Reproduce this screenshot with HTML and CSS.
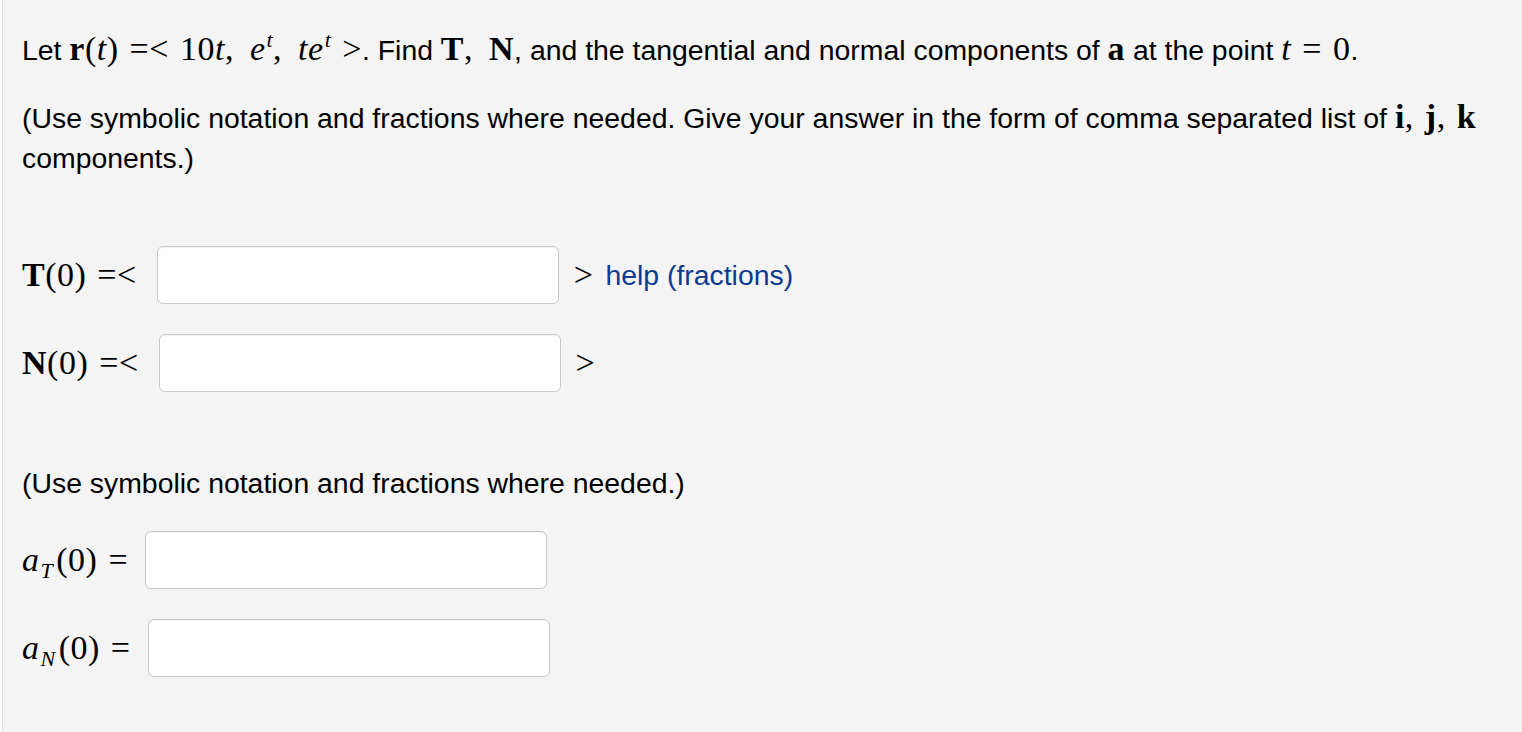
FILE: index.html
```html
<!DOCTYPE html>
<html>
<head>
<meta charset="utf-8">
<link rel="stylesheet" href="styles.css">
</head>
<body>
<div class="panel">
  <p class="q">Let <span class="m"><b>r</b>(<i>t</i>)<span class="rel">=&lt;</span>10<i>t</i>,<span class="sp"></span><i>e<sup>t</sup></i>,<span class="sp"></span><i>te<sup>t</sup></i><span class="rel r1">&gt;</span></span>. Find <span class="m"><b>T</b>,<span class="sp"></span><b>N</b></span>, and the tangential and normal components of <span class="m"><b>a</b></span> at the point <span class="m"><i>t</i><span class="rel">=</span>0</span>.</p>
  <p class="note">(Use symbolic notation and fractions where needed. Give your answer in the form of comma separated list of <span class="m"><b>i</b>,<span class="sp sm"></span><b>j</b>,<span class="sp sm"></span><b>k</b></span> components.)</p>
  <div class="row first">
    <span class="m lbl vec"><b>T</b>(0)<span class="rel">=&lt;</span></span>
    <input class="ans" type="text">
    <span class="m close">&gt;</span>
    <a class="help" href="#">help (fractions)</a>
  </div>
  <div class="row">
    <span class="m lbl vec"><b>N</b>(0)<span class="rel">=&lt;</span></span>
    <input class="ans" type="text">
    <span class="m close">&gt;</span>
  </div>
  <p class="note second">(Use symbolic notation and fractions where needed.)</p>
  <div class="row tight">
    <span class="m lbl"><i>a<sub>T</sub></i>(0)<span class="rel">=</span></span>
    <input class="ans" type="text">
  </div>
  <div class="row">
    <span class="m lbl"><i>a<sub>N</sub></i>(0)<span class="rel">=</span></span>
    <input class="ans" type="text">
  </div>
</div>
</body>
</html>
```

FILE: styles.css
```css
html, body {
  margin: 0;
  padding: 0;
  background: #fbfbfb;
}
.panel {
  margin-left: 2px;
  border-left: 1px solid #dedede;
  background: #f4f4f4;
  min-height: 732px;
  box-sizing: border-box;
  padding: 30px 19px 0 19px;
  font-family: "Liberation Sans", Arial, sans-serif;
  font-size: 28.4px;
  line-height: 40px;
  color: #000;
}
p {
  margin: 0;
}
.note {
  margin-top: 28px;
}
.note.second {
  margin-top: 71px;
}
.m {
  font-family: "Liberation Serif", "Times New Roman", serif;
  font-size: 34px;
  line-height: 1;
  letter-spacing: 0.5px;
}
.m b {
  font-weight: bold;
}
.rel {
  margin: 0 11px;
}
.rel.r1 {
  margin-right: 0;
}
.sp {
  display: inline-block;
  width: 16px;
}
.sp.sm {
  width: 11px;
}
.m sup, .m sub {
  font-size: 22px;
  line-height: 0;
}
.m sup {
  vertical-align: 13px;
  margin-left: 1px;
}
.m sub {
  vertical-align: -7px;
  margin-left: 1px;
  margin-right: 3px;
}
.row {
  display: flex;
  align-items: center;
  height: 58px;
  margin-top: 30px;
}
.row.first {
  margin-top: 68px;
}
.row.tight {
  margin-top: 28px;
}
.lbl {
  white-space: nowrap;
  margin-right: 6px;
}
.lbl.vec {
  margin-right: 9px;
}
.ans {
  width: 402px;
  height: 58px;
  box-sizing: border-box;
  border: 1px solid #c9c9c9;
  border-radius: 6px;
  background: #fff;
  box-shadow: inset 0 1px 1px rgba(0,0,0,0.06);
  padding: 4px 8px;
  font-size: 20px;
}
.close {
  margin-left: 15px;
}
.help {
  margin-left: 12px;
  color: #0d3a8e;
  text-decoration: none;
  font-size: 28.4px;
}
```
